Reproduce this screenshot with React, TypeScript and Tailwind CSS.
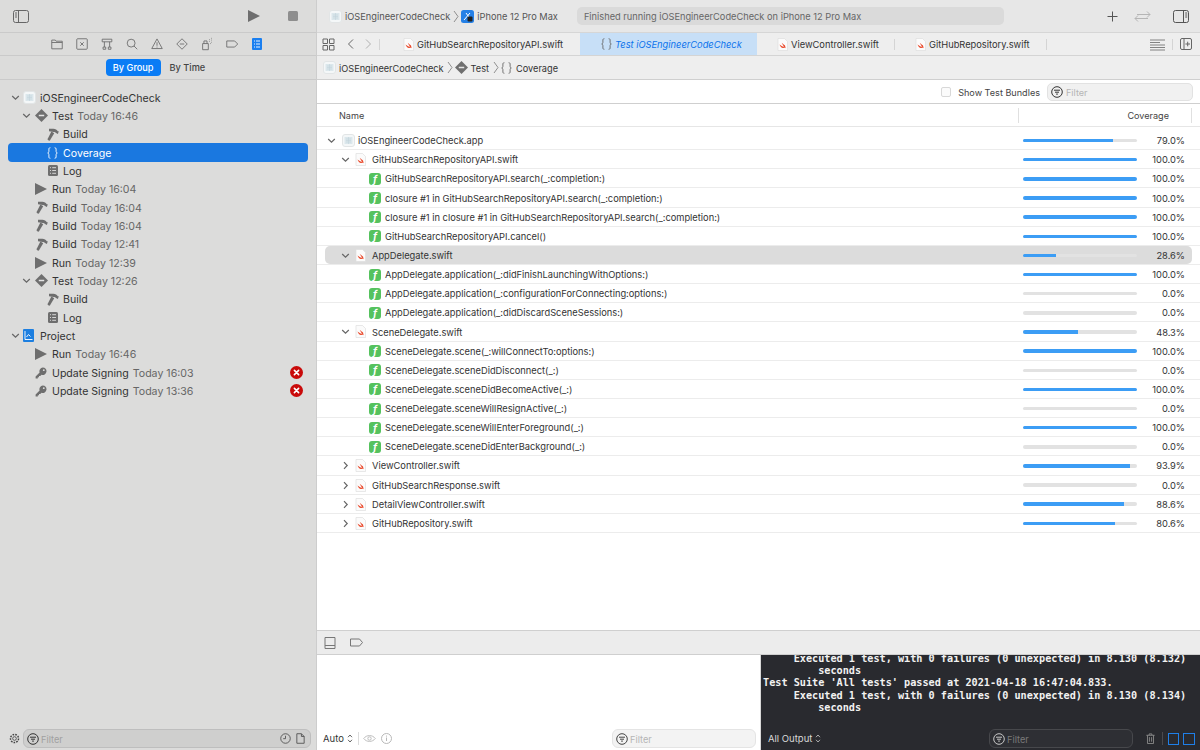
import React from 'react';

type IconProps = { className?: string };

const font = { fontFamily: 'Inter, "Noto Sans", sans-serif' };

// text sits about a pixel lower than Inter centres itself
const Txt = ({ className = '', children }: { className?: string; children: React.ReactNode }) => (
  <span className={`pt-[2px] whitespace-nowrap ${className}`}>{children}</span>
);

const Svg = ({ className = '', size = 14, children, view = '0 0 16 16' }: { className?: string; size?: number; children: React.ReactNode; view?: string }) => (
  <svg width={size} height={size} viewBox={view} fill="none" stroke="currentColor" strokeWidth={1} className={`shrink-0 ${className}`}>
    {children}
  </svg>
);

const AppIcon = ({ className = '' }: IconProps) => (
  <svg width="13" height="13" viewBox="0 0 13 13" className={`shrink-0 ${className}`}>
    <rect x="0.5" y="0.5" width="12" height="12" rx="2.5" fill="#f4f7f8" stroke="#e2e5e6" />
    <rect x="2.5" y="3" width="8" height="7" fill="#dbe7ec" />
    <path d="M4 5h5M4 6.5h5M4 8h5M6.5 3v7" stroke="#c3d4db" strokeWidth="0.6" />
  </svg>
);

const SwiftFile = () => (
  <svg width="11" height="13" viewBox="0 0 11 13" className="shrink-0">
    <path d="M1 0.5h6.5L10.5 3.5v9H1z" fill="#fbfbfb" stroke="#dedede" strokeWidth="0.7" />
    <path d="M2.5 6.5c2 1.6 3.5 2.3 4.5 2.3-.8-1.3-1.7-3-2.4-4 1.4 1.2 2.9 2.3 3.4 2.8.4 1 .4 2 .7 2.6-.7-.5-1.4-.6-2.2-.3-1.6.5-3-.8-4-3.4z" fill="#ea4a2c" />
  </svg>
);

const FuncIcon = () => (
  <span className="w-[12px] h-[12px] shrink-0 rounded-[3px] bg-[#55c25e] flex items-center justify-center text-white text-[10px] font-bold italic leading-none">
    f
  </span>
);

const TestIcon = ({ size = 13 }: { size?: number }) => (
  <svg width={size} height={size} viewBox="0 0 12 12" className="shrink-0">
    <path d="M6 0l6 6-6 6-6-6z" fill="#6f6f6f" />
    <rect x="3.5" y="5.3" width="5" height="1.4" fill="#e4e4e4" />
  </svg>
);

const HammerIcon = () => (
  <svg width="13" height="13" viewBox="0 0 13 13" className="shrink-0">
    <path d="M3 .8h4.4c2 0 3.6 1 4.4 2.5l1-.1-.9 2.8-1.9-1c-.7-.9-1.5-1.3-2.3-1L3 3.2z" fill="#6e6e6e" />
    <path d="M5.4 3.6l2.8 1.7-4.3 7.2c-.5.6-2.6-.7-2.3-1.5z" fill="#6e6e6e" />
  </svg>
);

const PlayIcon = ({ size = 11 }: { size?: number }) => (
  <svg width={size} height={size} viewBox="0 0 11 11" className="shrink-0">
    <path d="M0 0l11 5.5L0 11z" fill="#6e6e6e" />
  </svg>
);

const LogIcon = () => (
  <svg width="10" height="11" viewBox="0 0 10 11" className="shrink-0">
    <rect width="10" height="11" rx="1.5" fill="#6e6e6e" />
    <path d="M2 2.7h1M4.2 2.7h3.8M2 5.5h1M4.2 5.5h3.8M2 8.3h1M4.2 8.3h3.8" stroke="#e0e0e0" strokeWidth="0.9" />
  </svg>
);

const KeyIcon = () => (
  <svg width="12" height="12" viewBox="0 0 12 12" className="shrink-0">
    <path d="M7.8 0.5a3.7 3.7 0 1 1-1.2 7.2L5.2 9.1H4v1.2H2.8v1.2H.6V9.4l4-4a3.7 3.7 0 0 1 3.2-4.9z" fill="#6e6e6e" />
    <circle cx="8.8" cy="3.2" r="0.9" fill="#dcdcdb" />
  </svg>
);

const ErrorIcon = () => (
  <svg width="13" height="13" viewBox="0 0 13 13" className="shrink-0">
    <circle cx="6.5" cy="6.5" r="6.5" fill="#c90a0a" />
    <path d="M4.4 4.4l4.2 4.2M8.6 4.4l-4.2 4.2" stroke="#fff" strokeWidth="1.6" strokeLinecap="round" />
  </svg>
);

const Chevron = ({ open = true, className = 'text-[#666]' }: { open?: boolean; className?: string }) => (
  <svg width="9" height="9" viewBox="0 0 9 9" fill="none" stroke="currentColor" strokeWidth="1.2" className={`shrink-0 ${className}`}>
    {open ? <path d="M1.2 3l3.3 3.2L7.8 3" /> : <path d="M3 1.2l3.2 3.3L3 7.8" />}
  </svg>
);

const PathSep = () => (
  <svg width="6" height="13" viewBox="0 0 6 13" fill="none" stroke="#777" strokeWidth="0.8" className="shrink-0">
    <path d="M1 1l4 5.5L1 12" />
  </svg>
);

const Braces = ({ className = 'text-[#666]' }: IconProps) => (
  <svg width="11" height="12" viewBox="0 0 11 12" fill="none" stroke="currentColor" strokeWidth="0.9" className={`shrink-0 ${className}`}>
    <path d="M3.4.7c-1 0-1.5.4-1.5 1.3v2.4c0 .8-.4 1.3-1.2 1.6.8.3 1.2.8 1.2 1.6V10c0 .9.5 1.3 1.5 1.3" />
    <path d="M7.6.7c1 0 1.5.4 1.5 1.3v2.4c0 .8.4 1.3 1.2 1.6-.8.3-1.2.8-1.2 1.6V10c0 .9-.5 1.3-1.5 1.3" />
  </svg>
);

const FilterGlyph = ({ color = '#333' }: { color?: string }) => (
  <svg width="12" height="12" viewBox="0 0 12 12" fill="none" stroke={color} strokeWidth="1" className="shrink-0">
    <circle cx="6" cy="6" r="5.3" />
    <path d="M3 4.2h6M4 6.2h4M5.1 8.1h1.8" />
  </svg>
);

const NavIcons = () => (
  <div className="h-[22px] flex items-center justify-center gap-[11px] pr-[3px] text-[#6b6b6b]">
    <Svg>
      <path d="M2 3.5h4l1 1.3h7v8.7H2zM2 6.3h12" />
    </Svg>
    <Svg>
      <rect x="2" y="2" width="12" height="12" rx="1" />
      <path d="M6 6l4 4M10 6l-4 4" />
    </Svg>
    <Svg>
      <path d="M2.5 2.5h11v3h-11zM5 5.5v6M11 5.5v6M3.5 11.5h3v2.5h-3zM9.5 11.5h3v2.5h-3z" />
    </Svg>
    <Svg>
      <circle cx="7" cy="7" r="4.5" />
      <path d="M10.2 10.2l3.8 3.8" />
    </Svg>
    <Svg>
      <path d="M8 2.2l6 11H2zM8 6v4M8 11v1" />
    </Svg>
    <Svg>
      <path d="M8 2l6 6-6 6-6-6zM5.5 8h5" />
    </Svg>
    <Svg>
      <path d="M3 7.5h6.5V14.5H3zM4.5 7.5V4.5h3.5v3M10.5 3h.7M13 1.5h.7M10.5 5h.7M13 3.5h.7M13 6h.7M11.5 7.5h.7" />
    </Svg>
    <Svg>
      <path d="M2 4.5h9l3.5 3.5-3.5 3.5H2z" />
    </Svg>
    <svg width="14" height="14" viewBox="0 0 14 14" className="shrink-0">
      <rect x="2" y="1" width="10" height="12" rx="1" fill="#1a7ff0" />
      <path d="M4 4h1M6 4h4M4 7h1M6 7h4M4 10h1M6 10h4" stroke="#fff" strokeWidth="0.9" />
    </svg>
  </div>
);

type NavRow = { depth: number; icon: React.ReactNode; name: string; time?: string; chevron?: boolean; selected?: boolean; error?: boolean };

const navRows: NavRow[] = [
  { depth: 0, chevron: true, icon: <AppIcon />, name: 'iOSEngineerCodeCheck' },
  { depth: 1, chevron: true, icon: <TestIcon />, name: 'Test', time: 'Today 16:46' },
  { depth: 2, icon: <HammerIcon />, name: 'Build' },
  { depth: 2, icon: <Braces className="text-white" />, name: 'Coverage', selected: true },
  { depth: 2, icon: <LogIcon />, name: 'Log' },
  { depth: 1, icon: <PlayIcon size={12} />, name: 'Run', time: 'Today 16:04' },
  { depth: 1, icon: <HammerIcon />, name: 'Build', time: 'Today 16:04' },
  { depth: 1, icon: <HammerIcon />, name: 'Build', time: 'Today 16:04' },
  { depth: 1, icon: <HammerIcon />, name: 'Build', time: 'Today 12:41' },
  { depth: 1, icon: <PlayIcon size={12} />, name: 'Run', time: 'Today 12:39' },
  { depth: 1, chevron: true, icon: <TestIcon />, name: 'Test', time: 'Today 12:26' },
  { depth: 2, icon: <HammerIcon />, name: 'Build' },
  { depth: 2, icon: <LogIcon />, name: 'Log' },
  {
    depth: 0,
    chevron: true,
    icon: (
      <svg width="11" height="13" viewBox="0 0 11 13" className="shrink-0">
        <rect width="11" height="13" rx="1" fill="#1d7fe0" />
        <path d="M2 2v8.5h7.5M3.5 8l2-2.5 2 2" stroke="#fff" strokeWidth="0.9" fill="none" />
      </svg>
    ),
    name: 'Project',
  },
  { depth: 1, icon: <PlayIcon size={12} />, name: 'Run', time: 'Today 16:46' },
  { depth: 1, icon: <KeyIcon />, name: 'Update Signing', time: 'Today 16:03', error: true },
  { depth: 1, icon: <KeyIcon />, name: 'Update Signing', time: 'Today 13:36', error: true },
];

const Sidebar = () => (
  <aside className="w-[317px] shrink-0 h-full bg-[#dcdcdb] border-r border-[#cdcdcd] flex flex-col">
    <div className="h-[33px] shrink-0 border-b border-[#cacaca] flex items-center pl-[13px] pr-[18px] text-[#666]">
      <svg width="16" height="13" viewBox="0 0 16 13" fill="none" stroke="#666" strokeWidth="1">
        <rect x="0.5" y="0.5" width="15" height="12" rx="2" />
        <path d="M5.5 0.5v12M2 3h2M2 5h2M2 7h2" />
      </svg>
      <div className="ml-auto flex items-center gap-[28px]">
        <PlayIcon size={12} />
        <span className="w-[10px] h-[10px] rounded-[1.5px] bg-[#8e8e8e]" />
      </div>
    </div>
    <div className="h-[23px] shrink-0 border-b border-[#cacaca]">
      <NavIcons />
    </div>
    <div className="h-[24px] shrink-0 border-b border-[#cacaca] flex items-center justify-center gap-[9px] pr-[5px] text-[9.2px]">
      <span className="px-[7px] h-[17px] flex items-center rounded-[4px] bg-[#0a7cf5] text-white font-medium">By Group</span>
      <span className="text-[#444] font-medium">By Time</span>
    </div>
    <div className="pt-[8.5px] flex-1 text-[10.6px]">
      {navRows.map((r, i) => (
        <div
          key={i}
          className={`h-[18.33px] mx-2 pr-[5px] flex items-center rounded-[4px] ${r.selected ? 'bg-[#1a78e0] text-white' : 'text-[#333]'}`}
        >
          {r.depth === 0 && <span className="w-[2px] shrink-0" />}
          {r.depth === 1 && <span className="w-[13px] shrink-0" />}
          {r.depth === 2 && <span className="w-[28px] shrink-0" />}
          <span className="w-[10px] shrink-0 flex justify-center">{r.chevron && <Chevron />}</span>
          {r.depth === 0 && <span className="w-[3px] shrink-0" />}
          {r.depth === 1 && <span className="w-[4px] shrink-0" />}
          <span className={`${r.depth === 2 ? 'w-[13px] mr-[4px] justify-center' : 'w-[17px] justify-start'} shrink-0 flex items-center`}>{r.icon}</span>
          <Txt>{r.name}</Txt>
          {r.time && <Txt className="ml-[4px] text-[#666]">{r.time}</Txt>}
          {r.error && <span className="ml-auto"><ErrorIcon /></span>}
        </div>
      ))}
    </div>
    <div className="h-[23px] shrink-0 flex items-center pl-[9px] pr-[5px] gap-[3px]">
      <svg width="11" height="11" viewBox="0 0 12 12" fill="none" stroke="#444" strokeWidth="0.9" className="shrink-0">
        <circle cx="6" cy="6" r="2" />
        <circle cx="6" cy="6" r="4.4" strokeDasharray="1.8 1.2" strokeWidth="1.6" />
      </svg>
      <div className="flex-1 h-[19px] rounded-[6px] bg-[#cfcfce] border border-[#bebebe] flex items-center pl-[3px] pr-[4px] gap-[2px]">
        <FilterGlyph />
        <Txt className="text-[9.2px] text-[#a0a0a0]">Filter</Txt>
        <span className="ml-auto flex items-center gap-[4px] text-[#555]">
          <Svg size={11} view="0 0 12 12">
            <circle cx="6" cy="6" r="5.2" />
            <path d="M6 3v3.2H3.5" />
          </Svg>
          <Svg size={11} view="0 0 12 12">
            <path d="M2 .8h5l3 3v7.4H2zM7 .8v3h3" />
          </Svg>
        </span>
      </div>
    </div>
  </aside>
);

const Toolbar = () => (
  <div className="h-[33px] shrink-0 bg-[#e7e7e7] border-b border-[#d6d6d6] flex items-center pl-[12px] pr-[11px] text-[9.25px] text-[#555]">
    <AppIcon />
    <Txt className="ml-[3px]">iOSEngineerCodeCheck</Txt>
    <span className="ml-[3px] mr-[2px]"><PathSep /></span>
    <svg width="13" height="13" viewBox="0 0 13 13" className="shrink-0">
      <rect width="13" height="13" rx="2.5" fill="#2580e6" />
      <path d="M3 10l6-7M5 3l5 7" stroke="#fff" strokeWidth="1" />
      <rect x="6.5" y="6.5" width="5" height="5" rx="1" fill="#222" />
    </svg>
    <Txt className="ml-[3px]">iPhone 12 Pro Max</Txt>
    <div className="ml-[19px] w-[427px] h-[18px] rounded-[5px] bg-[#dadada] flex items-center pl-[7px] text-[#666]">
      <Txt>Finished running iOSEngineerCodeCheck on iPhone 12 Pro Max</Txt>
    </div>
    <div className="ml-auto flex items-center text-[#555]">
      <Svg size={11} view="0 0 11 11"><path d="M5.5 .5v10M.5 5.5h10" /></Svg>
      <span className="ml-[16px] text-[#b5b5b5]">
        <svg width="17" height="13" viewBox="0 0 17 13" fill="none" stroke="currentColor" strokeWidth="1" className="shrink-0">
          <path d="M3 4.5h13M13 1.5l3 3-3 3M14 8.5H1M4 5.5l-3 3 3 3" />
        </svg>
      </span>
      <svg width="16" height="13" viewBox="0 0 16 13" fill="none" stroke="#555" strokeWidth="1" className="ml-[22px] shrink-0">
        <rect x="0.5" y="0.5" width="15" height="12" rx="2" />
        <path d="M10.5 .5v12M12.2 3h2M12.2 5h2M12.2 7h2" />
      </svg>
    </div>
  </div>
);

const Tab = ({ label, width, pad, sep = true }: { label: string; width: string; pad: string; sep?: boolean }) => (
  <div className={`${width} h-full flex items-center ${pad}`}>
    <SwiftFile />
    <Txt className="ml-[3px]">{label}</Txt>
    {sep && <span className="ml-auto w-px h-[11px] bg-[#d4d4d4]" />}
  </div>
);

const TabBar = () => (
  <div className="h-[23px] shrink-0 bg-[#eeeeee] border-b border-[#d4d4d4] flex items-center text-[9.3px] text-[#333]">
    <div className="w-[67px] h-full shrink-0 flex items-center pl-[5px] text-[#666]">
      <Svg size={13} view="0 0 13 13">
        <path d="M1 1h4.5v4.5H1zM7.5 1H12v4.5H7.5zM1 7.5h4.5V12H1zM7.5 7.5H12V12H7.5z" />
      </Svg>
      <span className="ml-[11px]"><Svg size={10} view="0 0 10 10"><path d="M7 .5L2.5 5 7 9.5" /></Svg></span>
      <span className="ml-[7px] text-[#b0b0b0]"><Svg size={10} view="0 0 10 10"><path d="M3 .5L7.5 5 3 9.5" /></Svg></span>
      <span className="ml-[6px] w-px h-[11px] bg-[#d4d4d4]" />
    </div>
    <Tab label="GitHubSearchRepositoryAPI.swift" width="w-[196px]" pad="pl-[19px]" sep={false} />
    <div className="w-[177px] h-full bg-[#c7dff7] flex items-center pl-[21px] gap-[3px] text-[#0b73ec] italic">
      <Braces />
      <Txt>Test iOSEngineerCodeCheck</Txt>
    </div>
    <Tab label="ViewController.swift" width="w-[138px]" pad="pl-[20px]" />
    <Tab label="GitHubRepository.swift" width="w-[152px]" pad="pl-[20px]" />
    <div className="ml-auto flex items-center pr-[8px] text-[#666]">
      <Svg size={15} view="0 0 15 15"><path d="M0 3h15M0 5.5h10M0 8h15M0 10.5h15M0 13h15" strokeWidth="0.8" /></Svg>
      <span className="mx-[7px] w-px h-[11px] bg-[#d4d4d4]" />
      <Svg size={12} view="0 0 12 12"><rect x=".5" y=".5" width="11" height="11" rx="1.5" /><path d="M4 .5v11M7.7 3.7v4.6M5.4 6h4.6" /></Svg>
    </div>
  </div>
);

const JumpBar = () => (
  <div className="h-[24px] shrink-0 bg-[#eeeeee] border-b border-[#cfcfcf] flex items-center pl-[6px] text-[9.2px] text-[#333]">
    <AppIcon />
    <Txt className="ml-[3px]">iOSEngineerCodeCheck</Txt>
    <span className="ml-[3px] mr-[2px]"><PathSep /></span>
    <TestIcon />
    <Txt className="ml-[3px]">Test</Txt>
    <span className="ml-[4px] mr-[2px]"><PathSep /></span>
    <Braces />
    <Txt className="ml-[4px]">Coverage</Txt>
  </div>
);

const OptionsRow = () => (
  <div className="h-[24px] shrink-0 bg-white border-b border-[#cfcfcf] flex items-center justify-end pr-[7px] text-[9.1px] text-[#444]">
    <span className="w-[10px] h-[10px] rounded-[2px] border border-[#d8d8d8] bg-[#fbfbfb]" />
    <Txt className="ml-[7px]">Show Test Bundles</Txt>
    <div className="ml-[7px] w-[146px] h-[18px] rounded-[5px] border border-[#e2e2e2] bg-[#f1f1f1] flex items-center pl-[3px] gap-[3px]">
      <FilterGlyph />
      <Txt className="text-[#b5b5b5]">Filter</Txt>
    </div>
  </div>
);

const HeaderRow = () => (
  <div className="h-[23px] shrink-0 bg-white border-b border-[#e6e6e6] flex items-center text-[9.1px] text-[#444]">
    <Txt className="pl-[22px]">Name</Txt>
    <div className="ml-auto w-[174px] h-[15px] mr-[8px] border-x border-[#e0e0e0] flex items-center justify-end pr-[22px]">
      <Txt>Coverage</Txt>
    </div>
  </div>
);

type CovRow = { depth: 0 | 1 | 2; name: string; pct: number; open?: boolean; highlight?: boolean };

const rows: CovRow[] = [
  { depth: 0, name: 'iOSEngineerCodeCheck.app', pct: 79.0, open: true },
  { depth: 1, name: 'GitHubSearchRepositoryAPI.swift', pct: 100, open: true },
  { depth: 2, name: 'GitHubSearchRepositoryAPI.search(_:completion:)', pct: 100 },
  { depth: 2, name: 'closure #1 in GitHubSearchRepositoryAPI.search(_:completion:)', pct: 100 },
  { depth: 2, name: 'closure #1 in closure #1 in GitHubSearchRepositoryAPI.search(_:completion:)', pct: 100 },
  { depth: 2, name: 'GitHubSearchRepositoryAPI.cancel()', pct: 100 },
  { depth: 1, name: 'AppDelegate.swift', pct: 28.6, open: true, highlight: true },
  { depth: 2, name: 'AppDelegate.application(_:didFinishLaunchingWithOptions:)', pct: 100 },
  { depth: 2, name: 'AppDelegate.application(_:configurationForConnecting:options:)', pct: 0 },
  { depth: 2, name: 'AppDelegate.application(_:didDiscardSceneSessions:)', pct: 0 },
  { depth: 1, name: 'SceneDelegate.swift', pct: 48.3, open: true },
  { depth: 2, name: 'SceneDelegate.scene(_:willConnectTo:options:)', pct: 100 },
  { depth: 2, name: 'SceneDelegate.sceneDidDisconnect(_:)', pct: 0 },
  { depth: 2, name: 'SceneDelegate.sceneDidBecomeActive(_:)', pct: 100 },
  { depth: 2, name: 'SceneDelegate.sceneWillResignActive(_:)', pct: 0 },
  { depth: 2, name: 'SceneDelegate.sceneWillEnterForeground(_:)', pct: 100 },
  { depth: 2, name: 'SceneDelegate.sceneDidEnterBackground(_:)', pct: 0 },
  { depth: 1, name: 'ViewController.swift', pct: 93.9, open: false },
  { depth: 1, name: 'GitHubSearchResponse.swift', pct: 0, open: false },
  { depth: 1, name: 'DetailViewController.swift', pct: 88.6, open: false },
  { depth: 1, name: 'GitHubRepository.swift', pct: 80.6, open: false },
];

const CoverageRow = ({ row }: { row: CovRow }) => (
  <div className="h-[19.15px] border-b border-[#ececec] px-2">
    <div className={`h-full pt-px flex items-center rounded-[5px] pr-[7px] ${row.highlight ? 'bg-[#dcdcdc]' : ''}`}>
      {row.depth === 0 && <span className="w-[1px] shrink-0" />}
      {row.depth === 1 && <span className="w-[15px] shrink-0" />}
      {row.depth === 2 && <span className="w-[44px] shrink-0" />}
      {row.depth < 2 && (
        <span className="w-[10px] shrink-0 flex justify-center">
          <Chevron open={row.open} />
        </span>
      )}
      {row.depth === 0 && <span className="ml-[6px] mr-[3px]"><AppIcon /></span>}
      {row.depth === 1 && <span className="ml-[5px] mr-[6px]"><SwiftFile /></span>}
      {row.depth === 2 && <span className="mr-[4px]"><FuncIcon /></span>}
      <span className="pt-[1px] whitespace-nowrap">{row.name}</span>
      <div className="ml-auto w-[114px] h-[3.5px] rounded-full bg-[#e2e2e2] overflow-hidden shrink-0">
        <div className="h-full bg-[#3c9df5]" style={{ width: `${row.pct}%` }} />
      </div>
      <span className="pt-[1px] w-[48px] text-right shrink-0">{row.pct.toFixed(1)}%</span>
    </div>
  </div>
);

const DebugBar = () => (
  <div className="h-[25px] shrink-0 bg-[#ececec] border-y border-[#cfcfcf] flex items-center pl-[7px] gap-[14px] text-[#777]">
    <Svg size={12} view="0 0 12 12">
      <path d="M1 .5h10v11H1zM1 8.5h10" />
    </Svg>
    <Svg size={13} view="0 0 13 13">
      <path d="M.5 3h9l3 3.5-3 3.5h-9z" />
    </Svg>
  </div>
);

const FilterField = ({ dark = false }: { dark?: boolean }) => (
  <div className={`w-[144px] h-[19px] rounded-[6px] border flex items-center pl-[3px] gap-[2px] text-[9.2px] ${dark ? 'border-[#47484c] bg-[#2e2f34] text-[#7a7a7a]' : 'border-[#e4e4e4] bg-[#f3f3f3] text-[#b5b5b5]'}`}>
    <FilterGlyph color={dark ? '#c8c8c8' : '#444'} />
    <Txt>Filter</Txt>
  </div>
);

const BottomPanel = () => (
  <div className="h-[95px] shrink-0 flex">
    <div className="w-[444px] shrink-0 bg-white flex flex-col justify-end border-r border-[#d8d8d8]">
      <div className="h-[23px] flex items-center pl-[6px] pr-[4px] text-[9.5px] text-[#333]">
        <Txt>Auto</Txt>
        <svg width="6" height="9" viewBox="0 0 6 9" fill="none" stroke="#555" strokeWidth="0.9" className="ml-[3px]">
          <path d="M1 3.2L3 1l2 2.2M1 5.8L3 8l2-2.2" />
        </svg>
        <span className="ml-[5px] w-px h-[13px] bg-[#dcdcdc]" />
        <span className="ml-[4px] text-[#b8b8b8]">
          <svg width="13" height="9" viewBox="0 0 13 9" fill="none" stroke="currentColor" strokeWidth="0.9">
            <path d="M.7 4.5C3.5.6 9.5.6 12.3 4.5 9.5 8.4 3.5 8.4.7 4.5z" />
            <circle cx="6.5" cy="4.5" r="1.7" />
          </svg>
        </span>
        <span className="ml-[5px] text-[#b8b8b8]">
          <Svg size={11} view="0 0 11 11"><circle cx="5.5" cy="5.5" r="5" /><path d="M5.5 4.5v3.5M5.5 2.6v1" /></Svg>
        </span>
        <span className="ml-auto"><FilterField /></span>
      </div>
    </div>
    <div className="flex-1 bg-[#292a2f] flex flex-col text-white overflow-hidden">
      <pre className="flex-1 h-0 pl-[2px] text-[10.2px] leading-[12.45px] font-bold text-[#f2f2f2] -mt-[2.5px] overflow-hidden" style={{ fontFamily: '"DejaVu Sans Mono", monospace' }}>
{`     Executed 1 test, with 0 failures (0 unexpected) in 8.130 (8.132)
         seconds
Test Suite 'All tests' passed at 2021-04-18 16:47:04.833.
     Executed 1 test, with 0 failures (0 unexpected) in 8.130 (8.134)
         seconds`}
      </pre>
      <div className="h-[23px] shrink-0 flex items-center pl-[7px] pr-[5px] text-[9.5px] text-[#d8d8d8]">
        <Txt>All Output</Txt>
        <svg width="6" height="9" viewBox="0 0 6 9" fill="none" stroke="#bbb" strokeWidth="0.9" className="ml-[3px] shrink-0">
          <path d="M1 3.2L3 1l2 2.2M1 5.8L3 8l2-2.2" />
        </svg>
        <span className="ml-auto"><FilterField dark /></span>
        <span className="ml-[12px] text-[#8a8a8a]">
          <Svg size={11} view="0 0 11 12"><path d="M1 2.5h9M4 2.5V1h3v1.5M2.2 2.5v9h6.6v-9M4.3 4.5v5M6.7 4.5v5" /></Svg>
        </span>
        <span className="ml-[6px] w-px h-[13px] bg-[#4a4a4e]" />
        <span className="ml-[5px] w-[11px] h-[12px] border border-[#1f7fe8]" />
        <span className="ml-[4px] w-[12px] h-[12px] border border-[#1f7fe8]" />
      </div>
    </div>
  </div>
);

export default function App() {
  return (
    <div className="w-[1200px] h-[750px] flex overflow-hidden bg-white" style={font}>
      <Sidebar />
      <main className="flex-1 min-w-0 h-full flex flex-col">
        <Toolbar />
        <TabBar />
        <JumpBar />
        <OptionsRow />
        <HeaderRow />
        <div className="flex-1 min-h-0 pt-[4px] text-[9.3px] text-[#333] overflow-hidden">
          {rows.map((r, i) => (
            <CoverageRow key={i} row={r} />
          ))}
        </div>
        <DebugBar />
        <BottomPanel />
      </main>
    </div>
  );
}
